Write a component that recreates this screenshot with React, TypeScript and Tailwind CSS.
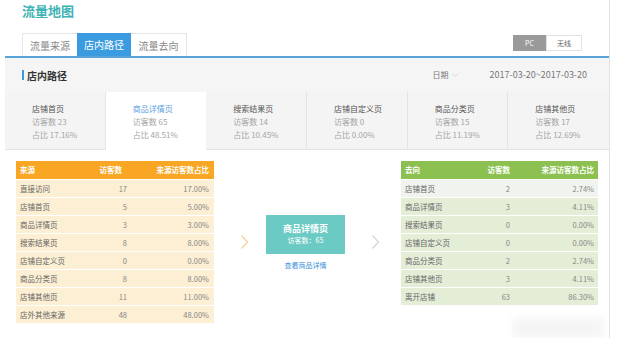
import React from 'react';

const cards = [
  { name: '店铺首页', uv: 23, pct: '17.16%' },
  { name: '商品详情页', uv: 65, pct: '48.51%', active: true },
  { name: '搜索结果页', uv: 14, pct: '10.45%' },
  { name: '店铺自定义页', uv: 0, pct: '0.00%' },
  { name: '商品分类页', uv: 15, pct: '11.19%' },
  { name: '店铺其他页', uv: 17, pct: '12.69%' },
];

const sources = [
  ['直接访问', '17', '17.00%'],
  ['店铺首页', '5', '5.00%'],
  ['商品详情页', '3', '3.00%'],
  ['搜索结果页', '8', '8.00%'],
  ['店铺自定义页', '0', '0.00%'],
  ['商品分类页', '8', '8.00%'],
  ['店铺其他页', '11', '11.00%'],
  ['店外其他来源', '48', '48.00%'],
];

const targets = [
  ['店铺首页', '2', '2.74%'],
  ['商品详情页', '3', '4.11%'],
  ['搜索结果页', '0', '0.00%'],
  ['店铺自定义页', '0', '0.00%'],
  ['商品分类页', '2', '2.74%'],
  ['店铺其他页', '3', '4.11%'],
  ['离开店铺', '63', '86.30%'],
];

function Chevron({ color }: { color: string }) {
  return (
    <svg width="9" height="16" viewBox="0 0 9 16" fill="none">
      <path d="M1.5 1.5 L7.5 8 L1.5 14.5" stroke={color} strokeWidth="1.3" />
    </svg>
  );
}

export default function App() {
  return (
    <div
      className="w-[618px] h-[338px] bg-white overflow-hidden relative"
      style={{ fontFamily: '"Noto Sans CJK SC", "Liberation Sans", sans-serif' }}
    >
      <div className="ml-[5px] w-[605px] h-full border-r border-[#e2e2e2] flex flex-col">
        {/* title */}
        <div className="pl-[17px] pt-[3px] h-[33px] text-[13px] leading-[16px] font-bold text-[#3db3b5]">流量地图</div>

        {/* tabs */}
        <div className="flex items-end justify-between pl-[17px] pr-[27px] border-b-2 border-[#5aa3d8]">
          <div className="flex h-[23px] text-[10px] leading-[23px]">
            <div className="w-[55px] text-center text-[#888] border border-b-0 border-[#e6e6e6] border-r-0">流量来源</div>
            <div className="w-[54px] text-center text-white bg-[#3a9be0]">店内路径</div>
            <div className="w-[56px] text-center text-[#888] border border-b-0 border-[#e6e6e6] border-l-0">流量去向</div>
          </div>
          <div className="flex mb-[5px] h-[16px] text-[7px] leading-[16px]">
            <div className="w-[33px] text-center bg-[#9a9a9a] text-white">PC</div>
            <div className="w-[36px] text-center text-[#666] border border-[#e2e2e2] leading-[14px]">无线</div>
          </div>
        </div>

        {/* section header */}
        <div className="bg-[#f5f5f5] h-[34px] flex items-center justify-between pl-[17px] pr-[22px]">
          <div className="flex items-center gap-[3px] text-[10px] font-bold text-[#333]">
            <span className="w-[2px] h-[10px] bg-[#3a9be0]" />
            店内路径
          </div>
          <div className="flex items-center text-[8px] text-[#777]">
            <span>日期</span>
            <svg width="8" height="6" viewBox="0 0 8 6" className="ml-[2px]">
              <path d="M1 1.5 L4 4.5 L7 1.5" stroke="#ccc" fill="none" strokeWidth="0.8" />
            </svg>
            <span className="ml-[31px] text-[9px]">2017-03-20~2017-03-20</span>
          </div>
        </div>

        {/* cards */}
        <div className="grid grid-cols-6 h-[58px]">
          {cards.map((c, i) => (
            <div
              key={c.name}
              className={
                c.active
                  ? 'bg-white pl-[27px] pt-[10px] text-[8px] leading-[13px]'
                  : 'bg-[#f4f4f4] border-b border-[#e4e4e4] pl-[27px] pt-[10px] text-[8px] leading-[13px]' +
                    (i < 5 ? ' border-r' : '')
              }
            >
              <div className={c.active ? 'text-[#5a9fe2]' : 'text-[#555]'}>{c.name}</div>
              <div className="text-[#a5a5a5]">访客数 {c.uv}</div>
              <div className="text-[#a5a5a5]">占比 {c.pct}</div>
            </div>
          ))}
        </div>

        {/* flow */}
        <div className="flex items-start px-[11px] pt-[11px]">
          {/* source table */}
          <div className="w-[198px] text-[7.5px]">
            <div className="flex h-[18px] items-center bg-[#f8a623] text-white font-bold pl-[4px] pr-[5px] whitespace-nowrap">
              <div className="w-[71px]">来源</div>
              <div className="w-[31px] text-right">访客数</div>
              <div className="flex-1 text-right">来源访客数占比</div>
            </div>
            {sources.map((r) => (
              <div key={r[0]} className="flex h-[18px] items-center bg-[#fcefd3] border-t border-white pl-[4px] pr-[5px] text-[#666]">
                <div className="w-[71px]">{r[0]}</div>
                <div className="w-[36px] text-right text-[#888]">{r[1]}</div>
                <div className="flex-1 text-right text-[#888]">{r[2]}</div>
              </div>
            ))}
          </div>

          {/* middle */}
          <div className="flex-1 h-[162px] flex items-center">
            <div className="ml-[26px]"><Chevron color="#f3d49c" /></div>
            <div className="ml-[17px] flex flex-col items-center">
              <div className="w-[79px] h-[39px] bg-[#6ccac4] flex flex-col items-center justify-center text-white">
                <div className="text-[9px] font-bold leading-[12px]">商品详情页</div>
                <div className="text-[7px] leading-[11px]">访客数：65</div>
              </div>
              <div className="mt-[6px] text-[7px] text-[#3a8fd8] leading-[10px]">查看商品详情</div>
            </div>
            <div className="ml-[26px]"><Chevron color="#d6d6d6" /></div>
          </div>

          {/* target table */}
          <div className="w-[197px] text-[7.5px]">
            <div className="flex h-[18px] items-center bg-[#8cc152] text-white font-bold pl-[4px] pr-[4px] whitespace-nowrap">
              <div className="w-[80px]">去向</div>
              <div className="w-[25px] text-right">访客数</div>
              <div className="flex-1 text-right">来源访客数占比</div>
            </div>
            {targets.map((r, i) => (
              <div
                key={r[0]}
                className={
                  (i === 0 ? 'bg-[#f1f4ee]' : 'bg-[#e4eed7]') +
                  ' flex h-[18px] items-center border-t border-white pl-[4px] pr-[4px] text-[#666]'
                }
              >
                <div className="w-[86px]">{r[0]}</div>
                <div className="w-[19px] text-right text-[#888]">{r[1]}</div>
                <div className="flex-1 text-right text-[#888]">{r[2]}</div>
              </div>
            ))}
          </div>
        </div>
      </div>

      {/* faint watermark smudge */}
      <div className="absolute left-[512px] top-[318px] w-[92px] h-[20px] bg-[#efefef] blur-[3px] opacity-60" />
    </div>
  );
}
